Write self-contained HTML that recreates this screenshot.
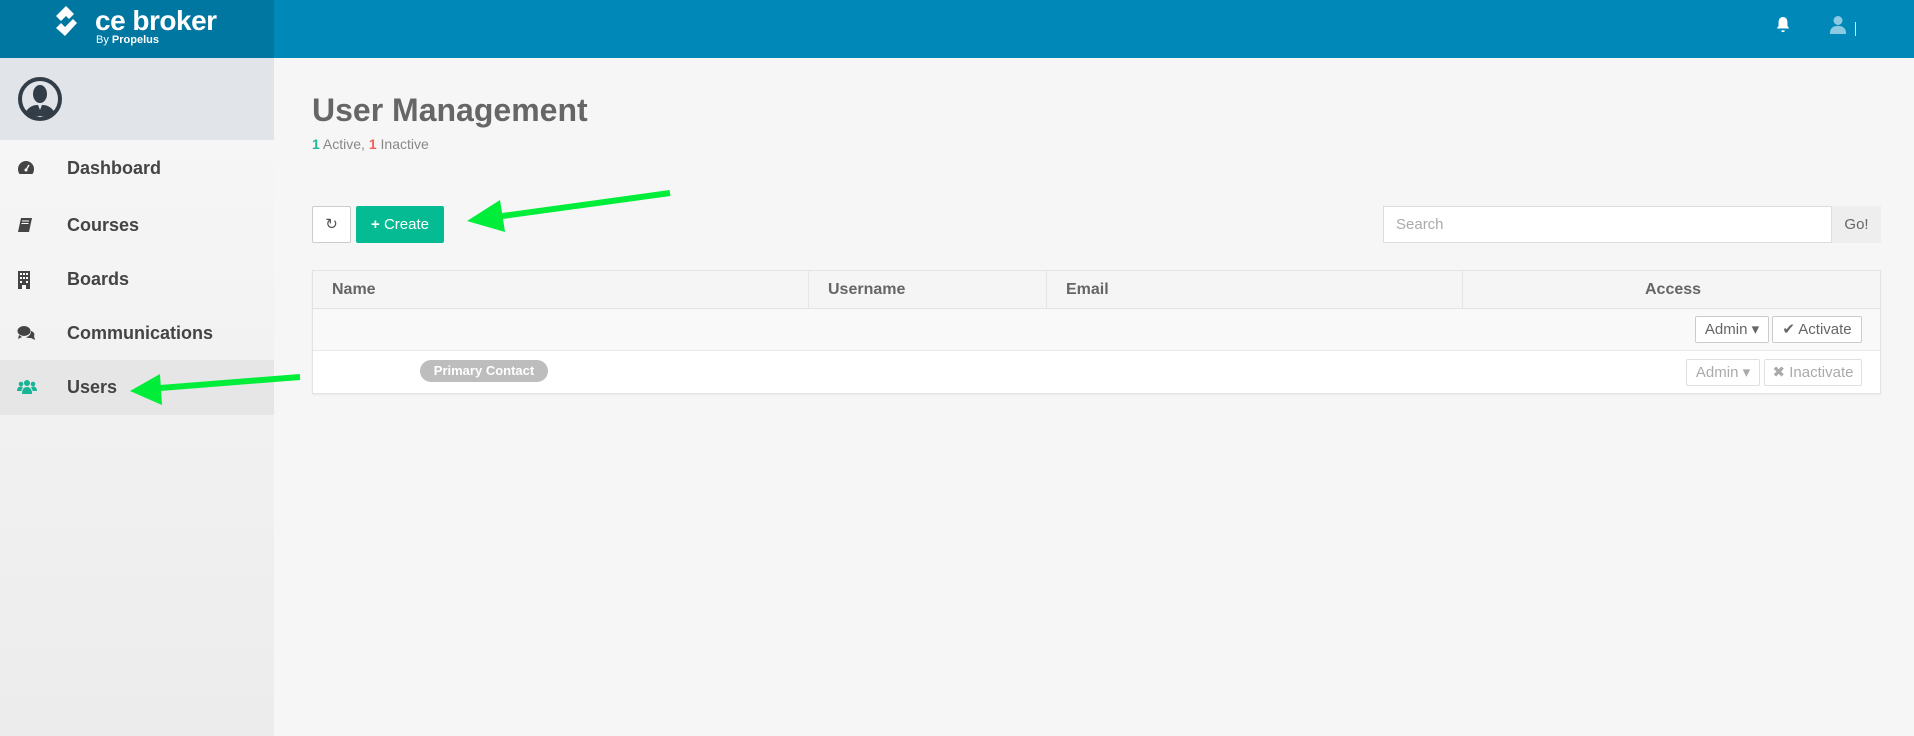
<!DOCTYPE html>
<html><head><meta charset="utf-8"><style>
*{box-sizing:border-box;margin:0;padding:0}
body{width:1914px;height:736px;overflow:hidden;background:#f6f6f6;font-family:"Liberation Sans",sans-serif;position:relative}
.hdr{position:absolute;left:0;top:0;width:1914px;height:58px;background:#0088b8}
.logo{position:absolute;left:0;top:0;width:274px;height:58px;background:#0077a0}
.side{position:absolute;left:0;top:58px;width:274px;height:678px;background:linear-gradient(#f7f7f7,#ececec)}
.av{height:82px;background:#e1e4e8;position:relative}
.nav{position:absolute;left:0;width:274px;height:55px;font-weight:bold;font-size:18px;color:#444;line-height:55px;padding-left:67px}
.nav svg{position:absolute;left:17px;top:19px}
.abs{position:absolute}
.btn{position:absolute;border:1px solid #ccc;background:#fff;border-radius:2px;font-size:15px;color:#555;text-align:center}
</style></head><body>
<div class="hdr"></div>
<div class="logo">
<svg class="abs" style="left:53px;top:4px" width="26" height="36" viewBox="0 0 26 36"><path d="M13 2 L3 12 L8 17 L13 12 L16 15 L21 10 Z" fill="#fff"/><path d="M3 24 L8 19 L12 23 L20 15 L24 19 L12 32 Z" fill="#fff"/></svg>
<div class="abs" style="left:95px;top:5px;color:#fff;font-size:28px;font-weight:bold;letter-spacing:-0.5px">ce broker</div>
<div class="abs" style="left:96px;top:34px;color:#fff;font-size:11px">By <b>Propelus</b></div>
</div>
<svg class="abs" style="left:1775px;top:16px" width="16" height="18" viewBox="0 0 18 20"><path d="M9 1c-3.5 0-5 3-5 6v4l-2 3h14l-2-3V7c0-3-1.5-6-5-6z M7 16h4a2 2 0 0 1-4 0z" fill="#fff"/></svg>
<svg class="abs" style="left:1829px;top:14px" width="18" height="22" viewBox="0 0 20 22"><circle cx="10" cy="6" r="5" fill="#8cc9e3"/><path d="M1 21c0-7 4-9 9-9s9 2 9 9z" fill="#8cc9e3"/></svg>
<div class="abs" style="left:1855px;top:22px;width:1px;height:14px;background:#cfe9f4"></div>
<div class="side">
<div class="av"><svg class="abs" style="left:17px;top:18px" width="46" height="46" viewBox="0 0 46 46"><circle cx="23" cy="23" r="20" fill="none" stroke="#323d48" stroke-width="4"/><ellipse cx="23" cy="18" rx="7" ry="9" fill="#323d48"/><path d="M8 37c4-7 9-8 13-8l2 5 2-5c4 0 9 1 13 8l-6 5-9-2-9 2z" fill="#323d48"/></svg></div>
</div>
<div class="nav" style="top:141px">Dashboard<svg width="18" height="16" viewBox="0 0 18 16"><path d="M9 1a8 8 0 0 0-8 8c0 2 .5 3.5 1.5 5h13c1-1.5 1.5-3 1.5-5a8 8 0 0 0-8-8z" fill="#444"/><circle cx="9" cy="10" r="1.5" fill="#fff"/><path d="M9 10l3-5" stroke="#fff" stroke-width="1.3"/></svg></div>
<div class="nav" style="top:198px">Courses<svg width="16" height="16" viewBox="0 0 16 16"><path d="M4 1h11l-3 14H1z" fill="#444"/><path d="M5 4h7M4.5 6.5h7" stroke="#fff"/></svg></div>
<div class="nav" style="top:252px">Boards<svg width="14" height="18" viewBox="0 0 14 18"><rect x="1" y="0" width="12" height="18" fill="#444"/><g fill="#fff"><rect x="3" y="2" width="2" height="2"/><rect x="6" y="2" width="2" height="2"/><rect x="9" y="2" width="2" height="2"/><rect x="3" y="6" width="2" height="2"/><rect x="6" y="6" width="2" height="2"/><rect x="9" y="6" width="2" height="2"/><rect x="3" y="10" width="2" height="2"/><rect x="9" y="10" width="2" height="2"/><rect x="5" y="14" width="4" height="4"/></g></svg></div>
<div class="nav" style="top:306px">Communications<svg width="18" height="16" viewBox="0 0 18 16"><ellipse cx="7" cy="6" rx="6.5" ry="5" fill="#444"/><path d="M2 10l-1 4 4-2z" fill="#444"/><path d="M14 6c3 1 4 3 3 5l1 4-4-2c-2 0-4 0-5-1 3 0 5-3 5-6z" fill="#444"/></svg></div>
<div class="nav" style="top:360px;background:#e6e6e6">Users<svg width="20" height="16" viewBox="0 0 20 16"><g fill="#17b595"><circle cx="10" cy="4" r="3"/><circle cx="4" cy="5" r="2.3"/><circle cx="16" cy="5" r="2.3"/><path d="M5 15c0-5 2-7 5-7s5 2 5 7z"/><path d="M0 12c0-3 1.5-4.5 4-4.5 1 0 1.5.5 2 1-1 1-1.5 2-1.5 3.5z"/><path d="M20 12c0-3-1.5-4.5-4-4.5-1 0-1.5.5-2 1 1 1 1.5 2 1.5 3.5z"/></g></svg></div>

<div class="abs" style="left:312px;top:92px;font-size:32px;font-weight:bold;color:#666">User Management</div>
<div class="abs" style="left:312px;top:136px;font-size:14px;color:#888"><b style="color:#1bb89a">1</b> Active, <b style="color:#f0625a">1</b> Inactive</div>

<div class="btn" style="left:312px;top:206px;width:39px;height:37px;line-height:35px;color:#555">&#x21bb;</div>
<div class="abs" style="left:356px;top:206px;width:88px;height:37px;background:#05bb94;border-radius:2px;color:#fff;font-size:15px;line-height:37px;text-align:center"><b>+</b> Create</div>

<div class="abs" style="left:1383px;top:206px;width:449px;height:37px;background:#fff;border:1px solid #ddd;font-size:15px;color:#aaa;line-height:35px;padding-left:12px">Search</div>
<div class="abs" style="left:1832px;top:206px;width:49px;height:37px;background:#eee;font-size:15px;color:#666;line-height:37px;text-align:center">Go!</div>

<div class="abs" style="left:312px;top:270px;width:1569px;height:124px;background:#fff;border:1px solid #e3e3e3;box-shadow:0 1px 2px rgba(0,0,0,.05)">
<div class="abs" style="left:0;top:0;width:1567px;height:38px;background:#f5f5f5;border-bottom:1px solid #e3e3e3"></div>
<div class="abs" style="left:495px;top:0;width:1px;height:38px;background:#e6e6e6"></div>
<div class="abs" style="left:733px;top:0;width:1px;height:38px;background:#e6e6e6"></div>
<div class="abs" style="left:1149px;top:0;width:1px;height:38px;background:#e6e6e6"></div>
<div class="abs" style="left:19px;top:10px;font-size:16px;font-weight:bold;color:#666">Name</div>
<div class="abs" style="left:515px;top:10px;font-size:16px;font-weight:bold;color:#666">Username</div>
<div class="abs" style="left:753px;top:10px;font-size:16px;font-weight:bold;color:#666">Email</div>
<div class="abs" style="left:1332px;top:10px;font-size:16px;font-weight:bold;color:#666">Access</div>
<div class="abs" style="left:0;top:38px;width:1567px;height:42px;background:#f9f9f9;border-bottom:1px solid #e8e8e8"></div>
<div class="abs" style="left:107px;top:89px;height:22px;border-radius:11px;background:#bdbdbd;width:128px;color:#fff;font-size:13px;font-weight:bold;line-height:22px;text-align:center">Primary Contact</div>
</div>
<div class="btn" style="left:1695px;top:316px;width:74px;height:27px;line-height:25px;color:#666">Admin &#9662;</div>
<div class="btn" style="left:1772px;top:316px;width:90px;height:27px;line-height:25px;color:#666">&#10004; Activate</div>
<div class="btn" style="left:1686px;top:359px;width:74px;height:27px;line-height:25px;color:#aaa;border-color:#e0e0e0">Admin &#9662;</div>
<div class="btn" style="left:1764px;top:359px;width:98px;height:27px;line-height:25px;color:#aaa;border-color:#e0e0e0">&#10006; Inactivate</div>

<svg class="abs" style="left:0;top:0" width="1914" height="736"><g fill="#00ee3a" stroke="#00ee3a">
<line x1="670" y1="193" x2="495" y2="217" stroke-width="6"/><polygon points="467,221 500,200 505,232" stroke="none"/>
<line x1="300" y1="377" x2="160" y2="388" stroke-width="6"/><polygon points="130,391 160,374 162,405" stroke="none"/></g></svg>
</body></html>
